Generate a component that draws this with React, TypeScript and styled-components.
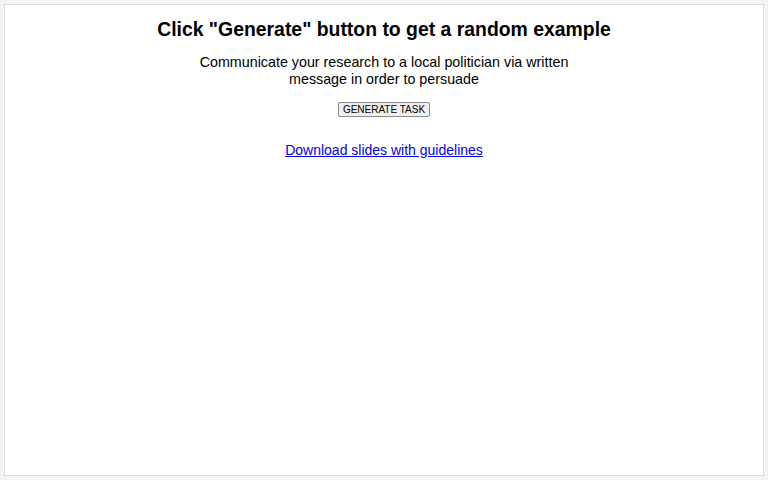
import React from "react";
import styled, { createGlobalStyle } from "styled-components";

const GlobalStyle = createGlobalStyle`
  html, body {
    margin: 0;
    padding: 0;
    height: 100%;
    background: #f4f4f4;
  }
  #root {
    height: 100%;
  }
`;

const Page = styled.div`
  box-sizing: border-box;
  height: 100vh;
  padding: 4px;
  font-family: "Liberation Sans", Arial, sans-serif;
`;

const Card = styled.main`
  box-sizing: border-box;
  height: 100%;
  background: #fff;
  border: 1px solid #dcdcdc;
  display: flex;
  flex-direction: column;
  align-items: center;
  padding-top: 13px;
  color: #000;
`;

const Title = styled.h1`
  margin: 0;
  font-size: 19.4px;
  font-weight: bold;
  line-height: 22px;
`;

const Task = styled.p`
  margin: 14px 0 0;
  width: 380px;
  font-size: 14.3px;
  line-height: 17px;
  text-align: center;
`;

const GenerateButton = styled.button`
  margin-top: 14px;
  font-family: "Liberation Sans", Arial, sans-serif;
  font-size: 10px;
  padding: 1px 4px;
  background: #efefef;
  border: 1px solid #8a8a8a;
  border-radius: 2px;
  color: #000;
`;

const SlidesLink = styled.a`
  margin-top: 25px;
  font-size: 14px;
  color: #0000ee;
  text-decoration: underline;
`;

export default function App() {
  return (
    <>
      <GlobalStyle />
      <Page>
        <Card>
          <Title>Click "Generate" button to get a random example</Title>
          <Task>
            Communicate your research to a local politician via written message
            in order to persuade
          </Task>
          <GenerateButton type="button">GENERATE TASK</GenerateButton>
          <SlidesLink href="#">Download slides with guidelines</SlidesLink>
        </Card>
      </Page>
    </>
  );
}
